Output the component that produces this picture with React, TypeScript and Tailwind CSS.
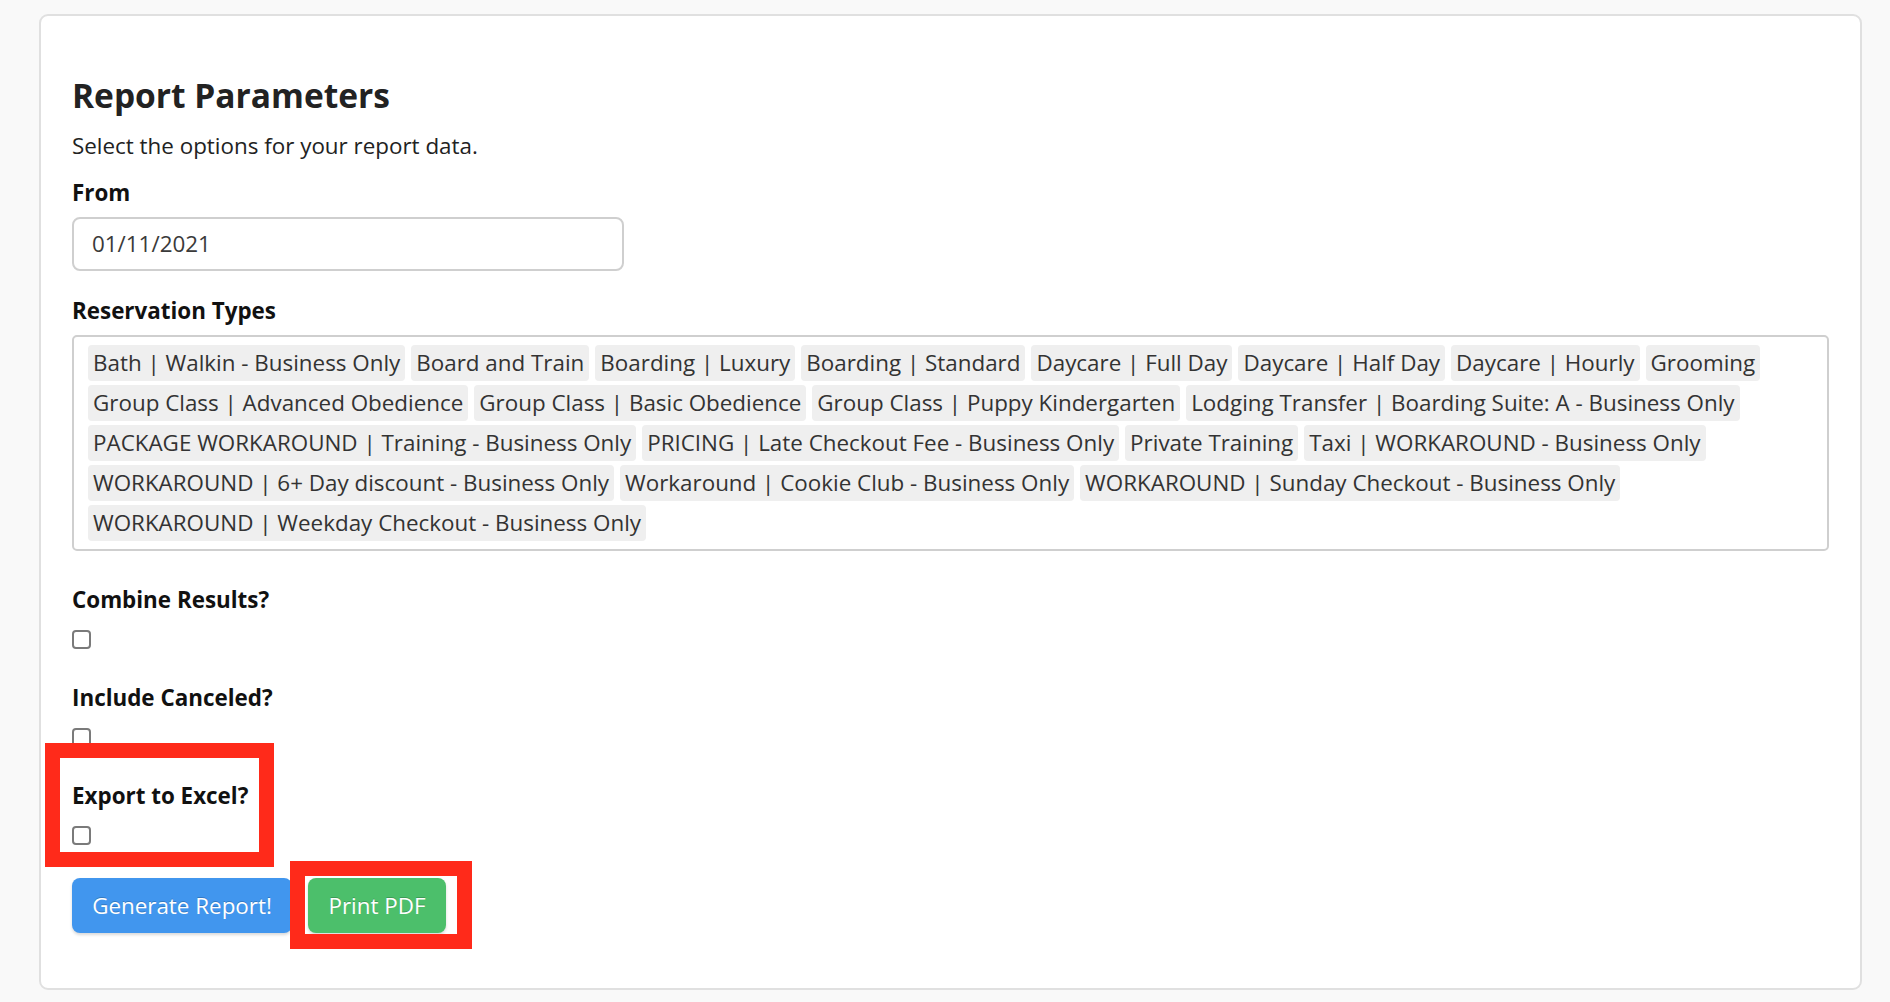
import React from "react";

const rows: string[][] = [
  [
    "Bath | Walkin - Business Only",
    "Board and Train",
    "Boarding | Luxury",
    "Boarding | Standard",
    "Daycare | Full Day",
    "Daycare | Half Day",
    "Daycare | Hourly",
    "Grooming",
  ],
  [
    "Group Class | Advanced Obedience",
    "Group Class | Basic Obedience",
    "Group Class | Puppy Kindergarten",
    "Lodging Transfer | Boarding Suite: A - Business Only",
  ],
  [
    "PACKAGE WORKAROUND | Training - Business Only",
    "PRICING | Late Checkout Fee - Business Only",
    "Private Training",
    "Taxi | WORKAROUND - Business Only",
  ],
  [
    "WORKAROUND | 6+ Day discount - Business Only",
    "Workaround | Cookie Club - Business Only",
    "WORKAROUND | Sunday Checkout - Business Only",
  ],
  ["WORKAROUND | Weekday Checkout - Business Only"],
];

function Check() {
  return (
    <div className="mt-[15px] w-[19px] h-[19px] rounded-[4px] border-2 border-[#7a7a7a] bg-white" />
  );
}

export default function App() {
  return (
    <div
      className="min-h-[1002px] w-full bg-[#f9f9f9] pt-[14px] pl-[39px] pr-[28px]"
      style={{ fontFamily: '"Open Sans", "Noto Sans", sans-serif' }}
    >
      <div className="relative h-[976px] rounded-[9px] border-2 border-[#e0e0e0] bg-white pl-[31px] pr-[30px] pt-[59px]">
        <h1 className="text-[33.5px] leading-[40px] font-bold text-[#222]">Report Parameters</h1>
        <p className="mt-[16px] text-[22.4px] leading-[30px] text-[#222]">
          Select the options for your report data.
        </p>
        <div className="mt-[17px] text-[22.4px] leading-[30px] font-bold text-[#111]">From</div>
        <div className="mt-[9px] flex h-[54px] w-[552px] items-center rounded-[8px] border-2 border-[#cfcfcf] px-[18px] text-[22.4px] text-[#3a3a3a]">
          01/11/2021
        </div>
        <div className="mt-[25px] text-[22.4px] leading-[30px] font-bold text-[#111]">
          Reservation Types
        </div>
        <div className="mt-[9px] flex h-[216px] w-[1757px] flex-col gap-[4px] rounded-[5px] border-2 border-[#cfcfcf] pl-[14px] pt-[8px]">
          {rows.map((r, i) => (
            <div key={i} className="flex gap-[6px]">
              {r.map((t) => (
                <span
                  key={t}
                  className="flex h-[36px] items-center whitespace-nowrap rounded-[4px] bg-[#efefef] px-[5px] text-[22.4px] text-[#333]"
                >
                  {t}
                </span>
              ))}
            </div>
          ))}
        </div>

        <div className="mt-[34px] text-[22.4px] leading-[30px] font-bold text-[#111]">
          Combine Results?
        </div>
        <Check />
        <div className="mt-[34px] text-[22.4px] leading-[30px] font-bold text-[#111]">
          Include Canceled?
        </div>
        <Check />
        <div className="mt-[34px] text-[22.4px] leading-[30px] font-bold text-[#111]">
          Export to Excel?
        </div>
        <Check />

        <div className="mt-[33px] flex gap-[16px]">
          <button className="h-[55px] w-[220px] rounded-[8px] bg-[#4196ee] text-[22.4px] text-white shadow-[0_2px_3px_rgba(0,0,0,0.15)] [text-shadow:0_-1px_0_rgba(0,0,0,0.2)]">
            Generate Report!
          </button>
          <button className="h-[55px] w-[138px] rounded-[8px] bg-[#4cbf6b] text-[22.4px] text-white shadow-[0_2px_3px_rgba(0,0,0,0.15)] [text-shadow:0_-1px_0_rgba(0,0,0,0.2)]">
            Print PDF
          </button>
        </div>

        <div className="pointer-events-none absolute left-[4px] top-[727px] h-[124px] w-[229px] border-[15px] border-[#ff2a1a]" />
        <div className="pointer-events-none absolute left-[249px] top-[845px] h-[88px] w-[182px] border-[15px] border-[#ff2a1a]" />
      </div>
    </div>
  );
}
